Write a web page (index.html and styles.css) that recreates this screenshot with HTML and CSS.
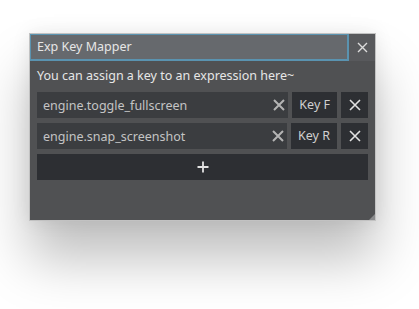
FILE: index.html
```html
<!DOCTYPE html>
<html lang="en">
<head>
  <meta charset="UTF-8">
  <title>Exp Key Mapper</title>
  <link rel="stylesheet" href="styles.css">
</head>
<body>

<div class="window">
  <div class="titlebar">
    <div class="title">Exp Key Mapper</div>
    <div class="close">
      <svg width="11" height="11" viewBox="0 0 11 11"><path d="M1 1L10 10M10 1L1 10" stroke="#dcdcdc" stroke-width="1.4"/></svg>
    </div>
  </div>

  <div class="content">
    <div class="hint">You can assign a key to an expression here~</div>

    <div class="row">
      <div class="line-edit">
        <span class="expr">engine.toggle_fullscreen</span>
        <svg class="clear" width="12" height="12" viewBox="0 0 12 12"><path d="M1 1L11 11M11 1L1 11" stroke="#b4b4b4" stroke-width="2"/></svg>
      </div>
      <div class="key-btn">Key F</div>
      <div class="del-btn">
        <svg width="12" height="12" viewBox="0 0 12 12"><path d="M1 1L11 11M11 1L1 11" stroke="#e2e2e2" stroke-width="1.6"/></svg>
      </div>
    </div>

    <div class="row">
      <div class="line-edit">
        <span class="expr">engine.snap_screenshot</span>
        <svg class="clear" width="12" height="12" viewBox="0 0 12 12"><path d="M1 1L11 11M11 1L1 11" stroke="#b4b4b4" stroke-width="2"/></svg>
      </div>
      <div class="key-btn">Key R</div>
      <div class="del-btn">
        <svg width="12" height="12" viewBox="0 0 12 12"><path d="M1 1L11 11M11 1L1 11" stroke="#e2e2e2" stroke-width="1.6"/></svg>
      </div>
    </div>

    <div class="add-btn">
      <svg width="12" height="12" viewBox="0 0 12 12"><path d="M6 0.5V11.5M0.5 6H11.5" stroke="#e2e2e2" stroke-width="1.8"/></svg>
    </div>
  </div>

  <div class="grip"></div>
</div>

</body>
</html>
```

FILE: styles.css
```css
:root {
  --window-bg: #505153;
  --title-bg: #66696d;
  --title-border: #5a93b0;
  --close-bg: #58595c;
  --edit-bg: #3b3d40;
  --button-bg: #2d2f33;
  --text-light: #e6e6e6;
  --text-dim: #c4c4c4;
}
* {
  margin: 0;
  padding: 0;
  box-sizing: border-box;
  font-family: 'Noto Sans', 'Open Sans', sans-serif;
}
body {
  background: #ffffff;
  width: 419px;
  height: 309px;
  overflow: hidden;
}
.window {
  position: relative;
  margin: 33px 0 0 29px;
  width: 347px;
  height: 188px;
  background: var(--window-bg);
  border: 1px solid #c2c2c2;
  box-shadow: 0 38px 50px rgba(0,0,0,0.25), 0 0 18px rgba(0,0,0,0.08);
  display: flex;
  flex-direction: column;
}
.titlebar {
  display: flex;
  height: 27px;
  background: var(--close-bg);
}
.title {
  flex: 1;
  background: var(--title-bg);
  border: 1px solid var(--title-border);
  border-width: 1px 2px 2px 1px;
  color: var(--text-light);
  font-size: 12.5px;
  line-height: 23px;
  padding-left: 6px;
}
.close {
  width: 26px;
  display: flex;
  align-items: center;
  justify-content: center;
}
.content {
  padding: 5px 7px 0 7px;
  display: flex;
  flex-direction: column;
  gap: 5px;
}
.hint {
  color: var(--text-light);
  font-size: 12.5px;
  line-height: 20px;
  margin-bottom: 1px;
}
.row {
  display: flex;
  gap: 4px;
  height: 26px;
}
.line-edit {
  flex: 1;
  background: var(--edit-bg);
  display: flex;
  align-items: center;
  justify-content: space-between;
  padding: 0 3px 0 6px;
}
.expr {
  color: var(--text-dim);
  font-size: 12.5px;
}
.key-btn {
  background: var(--button-bg);
  color: #d0d0d0;
  font-size: 12.5px;
  line-height: 26px;
  padding: 0 7px;
}
.del-btn {
  width: 27px;
  background: var(--button-bg);
  display: flex;
  align-items: center;
  justify-content: center;
}
.add-btn {
  height: 26px;
  background: var(--button-bg);
  display: flex;
  align-items: center;
  justify-content: center;
}
.grip {
  position: absolute;
  right: 0;
  bottom: 0;
  width: 0;
  height: 0;
  border-left: 6px solid transparent;
  border-bottom: 6px solid #8a8b8d;
}
```
